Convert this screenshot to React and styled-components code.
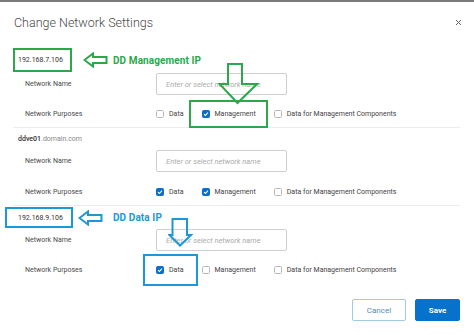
import React from "react";
import styled, { createGlobalStyle } from "styled-components";

const GREEN = "#2aa84a";
const BLUE = "#1c98d8";
const DELL = "#0a6fca";

const Global = createGlobalStyle`
  html, body { margin: 0; padding: 0; background: #fff; }
  body { font-family: Roboto, "Liberation Sans", sans-serif; }
`;

const Dialog = styled.div`
  position: relative;
  width: 474px;
  height: 335px;
  box-sizing: border-box;
  border-top: 2px solid #7a7a7a;
  padding: 0 14px 0 13px;
  display: flex;
  flex-direction: column;
  overflow: hidden;
  background: #fff;
`;

const Header = styled.div`
  height: 40px;
  display: flex;
  align-items: center;
  justify-content: space-between;
  padding-left: 1px;
`;

const Title = styled.h1`
  margin: 0;
  font-size: 12.5px;
  font-weight: 300;
  color: #4a4a4a;
`;

const Close = styled.button`
  border: 0;
  background: none;
  padding: 0;
  width: 8px;
  height: 8px;
  margin-right: -2px;
  display: flex;
  align-items: center;
  justify-content: center;
  cursor: pointer;
`;

const IpRow = styled.div`
  display: flex;
  align-items: center;
  margin-top: ${(p) => p.$mt}px;
  height: ${(p) => p.$h}px;
`;

const IpBox = styled.div`
  box-sizing: border-box;
  height: 100%;
  width: ${(p) => p.$w}px;
  margin-left: ${(p) => p.$ml}px;
  padding-left: ${(p) => p.$pl}px;
  border: 2px solid ${(p) => p.$color};
  display: flex;
  align-items: center;
  font-size: 7px;
  color: #333;
`;

const AnnotArrow = styled.svg`
  margin-left: ${(p) => p.$ml}px;
  flex: none;
`;

const AnnotText = styled.span`
  margin-left: ${(p) => p.$ml}px;
  font-size: 10px;
  font-weight: 700;
  color: ${(p) => p.$color};
  letter-spacing: 0.1px;
`;

const Field = styled.div`
  display: grid;
  grid-template-columns: 143px 1fr;
  align-items: center;
  height: ${(p) => p.$h}px;
  margin-top: ${(p) => p.$mt}px;
`;

const Label = styled.span`
  padding-left: 12px;
  font-size: 7px;
  color: #4a4a4a;
`;

const Input = styled.input`
  box-sizing: border-box;
  width: 131px;
  height: 100%;
  border: 1px solid #cfcfcf;
  border-radius: 2px;
  padding: 0 0 0 9px;
  font-family: inherit;
  font-size: 7.5px;
  outline: none;
  &::placeholder {
    color: #ababab;
    font-style: italic;
  }
`;

const Purposes = styled.div`
  display: flex;
  align-items: center;
  gap: 18px;
`;

const CheckItem = styled.label`
  position: relative;
  display: flex;
  align-items: center;
  gap: 5px;
  font-size: 7px;
  color: #444;
  ${(p) =>
    p.$hl
      ? `&::after {
    content: "";
    position: absolute;
    top: -${p.$hy}px;
    bottom: -${p.$hy}px;
    left: -13px;
    right: -${p.$hr}px;
    border: 2px solid ${p.$hl};
    pointer-events: none;
  }`
      : ""}
`;

const Box = styled.span`
  box-sizing: border-box;
  width: 8px;
  height: 8px;
  border-radius: 1.5px;
  border: 1px solid ${(p) => (p.$on ? DELL : "#b9b9b9")};
  background: ${(p) => (p.$on ? DELL : "#fff")};
  display: flex;
  align-items: center;
  justify-content: center;
`;

const Divider = styled.hr`
  margin: ${(p) => p.$mt}px 0 0 0;
  border: 0;
  border-top: 1px solid #ececec;
  height: 0;
`;

const Host = styled.div`
  margin-top: 4px;
  height: 14px;
  display: flex;
  align-items: center;
  padding-left: 5px;
  font-size: 7px;
  font-weight: 500;
  color: #333;
`;

const HostDomain = styled.span`
  font-weight: 400;
  color: #888;
`;

const Footer = styled.div`
  display: flex;
  justify-content: flex-end;
  gap: 9px;
  margin-top: 18px;
  height: 22px;
`;

const Button = styled.button`
  box-sizing: border-box;
  height: 22px;
  width: ${(p) => p.$w}px;
  border-radius: 2px;
  font-family: inherit;
  font-size: 8px;
  font-weight: ${(p) => (p.$primary ? 700 : 400)};
  color: ${(p) => (p.$primary ? "#fff" : "#4f8bb8")};
  background: ${(p) => (p.$primary ? "#0672cb" : "#fff")};
  border: 1px solid ${(p) => (p.$primary ? "#0672cb" : "#9fcbe5")};
  cursor: pointer;
`;

const DownArrow = styled.svg`
  position: absolute;
  left: ${(p) => p.$x}px;
  top: ${(p) => p.$y}px;
  pointer-events: none;
`;

const Check = ({ on, label, hl, hy, hr }) => (
  <CheckItem $hl={hl} $hy={hy} $hr={hr}>
    <Box $on={on}>
      {on && (
        <svg width="6" height="6" viewBox="0 0 6 6">
          <path d="M1 3.1 L2.4 4.5 L5 1.6" fill="none" stroke="#fff" strokeWidth="1.1" />
        </svg>
      )}
    </Box>
    {label}
  </CheckItem>
);

const LeftArrow = ({ color, ml }) => (
  <AnnotArrow $ml={ml} width="25" height="16" viewBox="0 0 25 16">
    <path
      d="M1.5 8 L10 1.5 L10 5 L23.5 5 L23.5 11 L10 11 L10 14.5 Z"
      fill="#fff"
      stroke={color}
      strokeWidth="2"
      strokeLinejoin="miter"
    />
  </AnnotArrow>
);

const Row = ({ a, b, c }) => (
  <Purposes>
    <Check {...a} label="Data" />
    <Check {...b} label="Management" />
    <Check {...c} label="Data for Management Components" />
  </Purposes>
);

export default function App() {
  return (
    <>
      <Global />
      <Dialog>
        <Header>
          <Title>Change Network Settings</Title>
          <Close aria-label="close">
            <svg width="7" height="7" viewBox="0 0 7 7">
              <path d="M1 1 L6 6 M6 1 L1 6" stroke="#666" strokeWidth="1" />
            </svg>
          </Close>
        </Header>

        <IpRow $mt={6} $h={24}>
          <IpBox $color={GREEN} $w={59} $ml={0} $pl={3}>192.168.7.106</IpBox>
          <LeftArrow color={GREEN} ml={11} />
          <AnnotText $color={GREEN} $ml={5}>DD Management IP</AnnotText>
        </IpRow>
        <Field $h={22} $mt={1}>
          <Label>Network Name</Label>
          <Input placeholder="Enter or select network name" />
        </Field>
        <Field $h={22} $mt={8}>
          <Label>Network Purposes</Label>
          <Row a={{}} b={{ on: true, hl: GREEN, hy: 10, hr: 12 }} c={{}} />
        </Field>
        <Divider $mt={2} />

        <Host>
          ddve01<HostDomain>.domain.com</HostDomain>
        </Host>
        <Field $h={22} $mt={4}>
          <Label>Network Name</Label>
          <Input placeholder="Enter or select network name" />
        </Field>
        <Field $h={22} $mt={9}>
          <Label>Network Purposes</Label>
          <Row a={{ on: true }} b={{ on: true }} c={{}} />
        </Field>
        <Divider $mt={2} />

        <IpRow $mt={1} $h={21}>
          <IpBox $color={BLUE} $w={68} $ml={-8} $pl={11}>192.168.9.106</IpBox>
          <LeftArrow color={BLUE} ml={5} />
          <AnnotText $color={BLUE} $ml={10}>DD Data IP</AnnotText>
        </IpRow>
        <Field $h={22} $mt={1}>
          <Label>Network Name</Label>
          <Input placeholder="Enter or select network name" />
        </Field>
        <Field $h={22} $mt={8}>
          <Label>Network Purposes</Label>
          <Row a={{ on: true, hl: BLUE, hy: 12, hr: 14 }} b={{}} c={{}} />
        </Field>

        <Footer>
          <Button $w={54}>Cancel</Button>
          <Button $w={45} $primary>Save</Button>
        </Footer>

        <DownArrow $x={218} $y={61} width="41" height="42" viewBox="0 0 41 42">
          <path
            d="M10 1 L24 1 L24 21 L39 21 L19.5 40 L1.5 21 L10 21 Z"
            fill="none"
            stroke={GREEN}
            strokeWidth="2"
          />
        </DownArrow>
        <DownArrow $x={168} $y={216} width="25" height="29" viewBox="0 0 25 29">
          <path
            d="M4.5 1 L19 1 L19 17 L23 17 L12 27.5 L1.5 17 L4.5 17 Z"
            fill="none"
            stroke={BLUE}
            strokeWidth="2"
          />
        </DownArrow>
      </Dialog>
    </>
  );
}
